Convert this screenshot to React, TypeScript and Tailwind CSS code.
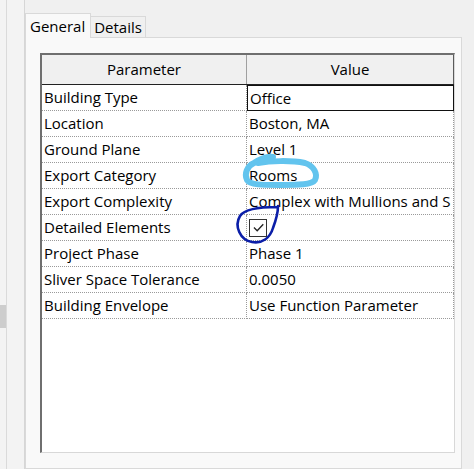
import React from "react";

const rows: { name: string; value: string; check?: boolean }[] = [
  { name: "Building Type", value: "Office" },
  { name: "Location", value: "Boston, MA" },
  { name: "Ground Plane", value: "Level 1" },
  { name: "Export Category", value: "Rooms" },
  { name: "Export Complexity", value: "Complex with Mullions and S" },
  { name: "Detailed Elements", value: "", check: true },
  { name: "Project Phase", value: "Phase 1" },
  { name: "Sliver Space Tolerance", value: "0.0050" },
  { name: "Building Envelope", value: "Use Function Parameter" },
];

function CheckBox() {
  return (
    <span className="flex h-[18px] w-[18px] items-center justify-center border border-[#333] bg-white">
      <svg viewBox="0 0 12 12" className="h-[13px] w-[13px]">
        <path d="M1.8 6 L4.8 9 L10.4 3" fill="none" stroke="#222" strokeWidth="1.2" />
      </svg>
    </span>
  );
}

export default function App() {
  return (
    <div
      className="relative flex h-[469px] w-[474px] overflow-hidden bg-[#f0f0f0] text-black"
      style={{ fontFamily: '"Open Sans", "Noto Sans", sans-serif' }}
    >
      {/* left edge: scroll strip */}
      <div className="flex w-[7px] flex-col border-r border-[#dadada] bg-[#f3f3f3]">
        <div className="h-[305px]" />
        <div className="h-[23px] w-[6px] bg-[#cdcdcd]" />
      </div>
      <div className="w-[18px] border-r border-[#d6d6d6] bg-[#f3f3f3]" />

      {/* tab control */}
      <div className="flex w-[437px] flex-col pt-[13px]">
        <div className="flex items-end">
          <div className="relative z-10 -mb-px flex h-[25px] items-center border border-b-0 border-[#d9d9d9] bg-[#f9f9f9] pl-[4px] pr-[5px] text-[15px]">
            General
          </div>
          <div className="flex h-[21px] items-center border border-b-0 border-l-0 border-[#d9d9d9] bg-[#f0f0f0] px-[3px] text-[15px]">
            Details
          </div>
        </div>
        <div className="flex-1 border border-[#d9d9d9] bg-[#f9f9f9] pl-[14px] pr-[4px] pt-[15px] pb-[15px]">
          <div className="flex h-full w-[415px] flex-col border-l-2 border-t-2 border-r border-b border-l-[#6f6f6f] border-t-[#6f6f6f] border-r-[#d8d8d8] border-b-[#d8d8d8] bg-white text-[15px]">
            <div className="flex h-[30px] border-b border-[#222] bg-[#f0f0f0]">
              <div className="flex w-[205px] items-center justify-center border-r border-[#a0a0a0]">
                Parameter
              </div>
              <div className="flex flex-1 items-center justify-center border-r border-[#5a5a5a]">
                Value
              </div>
            </div>
            {rows.map((r, i) => (
              <div key={r.name} className="flex h-[26px]">
                <div className="flex w-[205px] items-center border-b border-r border-dotted border-[#9a9a9a] pl-[2px] whitespace-nowrap">
                  {r.name}
                </div>
                <div
                  className={
                    i === 0
                      ? "flex flex-1 items-center overflow-hidden border border-[#111] pl-[2px] whitespace-nowrap"
                      : "flex flex-1 items-center overflow-hidden border-b border-r border-dotted border-[#9a9a9a] pl-[2px] whitespace-nowrap"
                  }
                >
                  {r.check ? <CheckBox /> : r.value}
                </div>
              </div>
            ))}
          </div>
        </div>
      </div>

      {/* pen annotations drawn over the grid */}
      <svg
        className="pointer-events-none absolute left-0 top-0"
        width="474"
        height="469"
        viewBox="0 0 474 469"
      >
        <path
          d="M273 157 C266 156 258 160 254 163 C247 166 244 174 247 180 C250 185 262 185 280 185 C298 185 312 185 315 180 C318 174 314 166 305 163 C290 160 270 161 258 163"
          fill="none"
          stroke="#62c4ee"
          strokeWidth="6"
          strokeLinecap="round"
          strokeLinejoin="round"
        />
        <path
          d="M277 207 C262 207 245 208 240 216 C234 226 240 240 252 242 C262 244 270 238 273 228 C276 220 278 212 278 206"
          fill="none"
          stroke="#0b1ea8"
          strokeWidth="2.6"
          strokeLinecap="round"
        />
      </svg>
    </div>
  );
}
